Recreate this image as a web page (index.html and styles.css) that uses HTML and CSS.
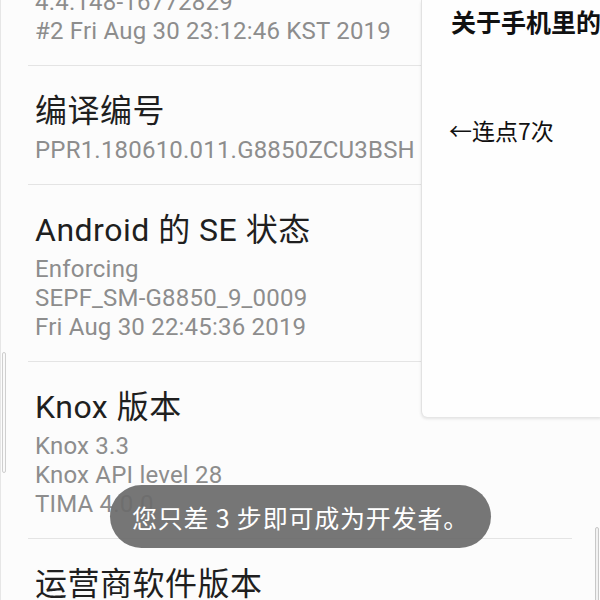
FILE: index.html
```html
<!DOCTYPE html>
<html lang="zh-CN">
<head>
<meta charset="utf-8">
<title>软件信息</title>
<link rel="stylesheet" href="styles.css">
</head>
<body>
<div class="screen">
  <div class="list">
    <div class="item">
      <div class="title">内核版本</div>
      <div class="sub">4.4.148-16772829</div>
      <div class="sub">#2 Fri Aug 30 23:12:46 KST 2019</div>
    </div>
    <div class="item">
      <div class="title">编译编号</div>
      <div class="sub">PPR1.180610.011.G8850ZCU3BSH</div>
    </div>
    <div class="item">
      <div class="title">Android 的 SE 状态</div>
      <div class="sub">Enforcing</div>
      <div class="sub">SEPF_SM-G8850_9_0009</div>
      <div class="sub">Fri Aug 30 22:45:36 2019</div>
    </div>
    <div class="item">
      <div class="title">Knox 版本</div>
      <div class="sub">Knox 3.3</div>
      <div class="sub">Knox API level 28</div>
      <div class="sub">TIMA 4.0.0</div>
    </div>
    <div class="item">
      <div class="title">运营商软件版本</div>
      <div class="sub">SAOMC_SM-G8850_CHC_CHC_PP_0009</div>
    </div>
  </div>

  <div class="note">
    <div class="note-title">关于手机里的软件信息</div>
    <div class="note-hint">←连点7次</div>
  </div>

  <div class="toast">您只差 3 步即可成为开发者。</div>

  <div class="edge-left"></div>
  <div class="edge-right"></div>
</div>
</body>
</html>
```

FILE: styles.css
```css
html, body {
  margin: 0;
  padding: 0;
}

body {
  background: #fcfcfc;
  font-family: Roboto, "Noto Sans CJK SC", sans-serif;
}

.screen {
  position: relative;
  width: 600px;
  height: 600px;
  overflow: hidden;
  background: #fcfcfc;
  border-left: 1px solid #e6e6e6;
  box-sizing: border-box;
}

.list {
  margin-top: -82px;
  padding: 0 28px 0 27px;
}

.item {
  padding: 25px 0 19px 7px;
  border-bottom: 1px solid #e4e4e4;
}

.title {
  font-size: 32px;
  line-height: 40px;
  letter-spacing: 0.5px;
  color: #1f1f1f;
  margin-bottom: 5px;
  white-space: nowrap;
}

.sub {
  font-size: 24px;
  line-height: 29px;
  letter-spacing: 0.2px;
  color: #8d8d8d;
  white-space: nowrap;
}

.note {
  position: absolute;
  top: 0;
  left: 420px;
  width: 180px;
  height: 417px;
  box-sizing: border-box;
  padding: 4px 0 0 29px;
  background: #fefefe;
  border-left: 1px solid #e2e2e2;
  border-bottom-left-radius: 6px;
  box-shadow: 0 2px 3px rgba(0, 0, 0, 0.10);
  font-family: "Noto Sans CJK SC", sans-serif;
  color: #111;
  white-space: nowrap;
  overflow: hidden;
}

.note-title {
  font-size: 25px;
  line-height: 34px;
  font-weight: 700;
}

.note-hint {
  margin-top: 77px;
  font-size: 23px;
  line-height: 30px;
  margin-left: -2px;
}

.toast {
  position: absolute;
  left: 109px;
  top: 485px;
  width: 381px;
  height: 63px;
  border-radius: 32px;
  background: rgba(108, 108, 108, 0.93);
  color: #fff;
  font-family: "Noto Sans CJK SC", sans-serif;
  font-size: 25px;
  letter-spacing: 0.8px;
  display: flex;
  align-items: center;
  justify-content: center;
}

.edge-left {
  position: absolute;
  left: 1px;
  top: 352px;
  width: 4px;
  height: 121px;
  border: 1px solid #cfcfcf;
  border-radius: 3px;
  background: #fafafa;
  box-sizing: border-box;
}

.edge-right {
  position: absolute;
  left: 594px;
  top: 527px;
  width: 4px;
  height: 80px;
  border: 1px solid #c8c8c8;
  border-radius: 3px;
  background: #f2f2f2;
  box-sizing: border-box;
}
```
